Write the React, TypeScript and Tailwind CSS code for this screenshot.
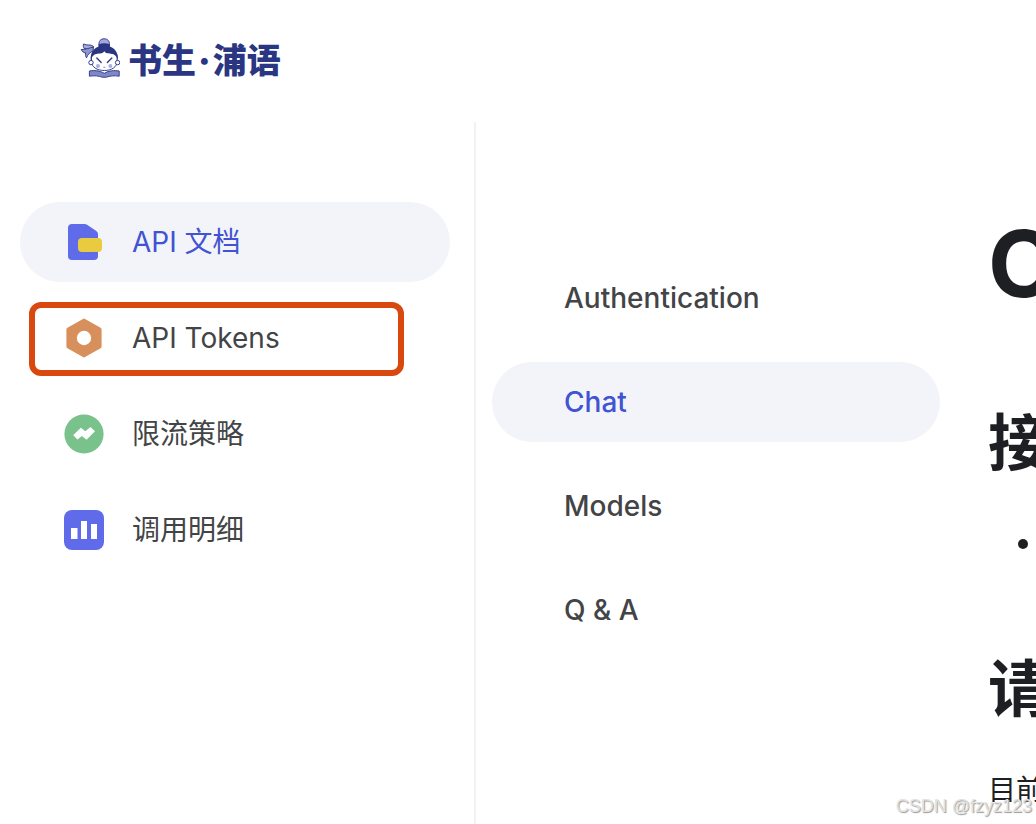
import type { ReactNode } from "react";
import clsx from "clsx";

function LogoMark() {
  return (
    <svg className="size-10 shrink-0" viewBox="0 0 40 40" fill="none" aria-hidden="true">
      <path d="M19 7.5C18.6 3 20.6.8 24.2.8S29.8 3 29.4 7.5Z" fill="#a3a9d8" stroke="#35408f" strokeWidth="1" />
      <path d="M18.5 6.6c3.6-1.7 7.8-1.7 11.4 0v2.6H18.5Z" fill="#2b3682" />
      <path d="M13.500 8.500C10.500 5.800 7.500 8 3.500 6c-.4 1.800-.3 3 .5 4.300l6.500 1.400Z" fill="#a3a9d8" stroke="#35408f" strokeWidth="1" />
      <path d="M13.500 9C9.500 9.800 5.500 11.800 1.200 11.500c.8 2 2.300 3.200 4.300 3.300-.2 1.900 0 3.400 1 5 1.300-3.700 3.500-5.300 6.500-6.800Z" fill="#8d95cc" stroke="#35408f" strokeWidth="1" />
      <path d="M11.500 19c0-5 5-9 12.800-9s12.800 4 12.800 9v4.500c0 5.500-5.500 9-12.800 9s-12.800-3.500-12.800-9Z" fill="#fff" stroke="#35408f" />
      <circle cx="11" cy="24.600" r="2.200" fill="#fff" stroke="#35408f" />
      <circle cx="37.600" cy="24.600" r="2.200" fill="#fff" stroke="#35408f" />
      <path d="M10.700 22.500C9.800 13.500 15 7.700 24.300 7.700S38.800 13.500 37.900 22.500c-1-2.500-1.700-5-4.400-6.200-3.300-1.300-7 .2-9.200-3-2.200 3.200-5.900 1.700-9.200 3-2.700 1.200-3.400 3.700-4.400 6.200Z" fill="#2b3682" />
      <path d="m16.800 20 4.400 4.500M31.800 20l-4.400 4.500" stroke="#2b3682" strokeWidth="1.300" strokeLinecap="round" />
      <circle cx="18" cy="28" r="2" fill="#a9aedb" />
      <circle cx="30.400" cy="28" r="2" fill="#a9aedb" />
      <path d="M23.300 29.300h2" stroke="#6a73b5" strokeWidth=".8" />
      <path d="M9.400 33c5-.8 10-.5 14.900 2.300C29.200 32.500 34.200 32.200 39.200 33v5.200c-5-.8-9.500-.3-12.800 1h-4.200c-3.300-1.300-7.800-1.800-12.800-1Z" fill="#7f88c4" stroke="#35408f" strokeWidth="1" />
    </svg>
  );
}

function DocIcon() {
  return (
    <svg className="size-10" viewBox="0 0 40 40" aria-hidden="true">
      <path d="M4 6a4 4 0 0 1 4-4h12.500c1 0 1.800.3 2.600.8L32.300 9c1.100.8 1.700 1.900 1.700 3.200V34a4 4 0 0 1-4 4H8a4 4 0 0 1-4-4Z" fill="#5f6be9" />
      <rect x="14" y="16" width="24" height="14" rx="4" fill="#e9cb3f" />
    </svg>
  );
}

function TokenIcon() {
  return (
    <svg className="size-10" viewBox="0 0 40 40" aria-hidden="true">
      <path d="M19 .9a2 2 0 0 1 2 0l15.600 8.800a2 2 0 0 1 1 1.700v17.200a2 2 0 0 1-1 1.700L21 39.100a2 2 0 0 1-2 0L3.400 30.300a2 2 0 0 1-1-1.700V11.400a2 2 0 0 1 1-1.700Z" fill="#d78f5b" />
      <circle cx="20" cy="20" r="7.200" fill="#fff" />
    </svg>
  );
}

function LimitIcon() {
  return (
    <svg className="size-10" viewBox="0 0 40 40" aria-hidden="true">
      <circle cx="20" cy="20" r="19.600" fill="#79c28b" />
      <path d="m9.200 21.200 7.600-7.500 4.500 3.600 5.200-4.300 4.500 4.200-8.500 8.500-4.600-3.700-4.400 3.500Z" fill="#fff" />
    </svg>
  );
}

function UsageIcon() {
  return (
    <svg className="size-10" viewBox="0 0 40 40" aria-hidden="true">
      <rect width="40" height="40" rx="8" fill="#5f6be9" />
      <path d="M7 18h6.500v11H7ZM17 11h6v18h-6ZM27 14h6v15h-6Z" fill="#fff" />
    </svg>
  );
}

type MenuItem = { label: string; icon: ReactNode; active?: boolean; marked?: boolean };

const menu: MenuItem[] = [
  { label: "API 文档", icon: <DocIcon />, active: true },
  { label: "API Tokens", icon: <TokenIcon />, marked: true },
  { label: "限流策略", icon: <LimitIcon /> },
  { label: "调用明细", icon: <UsageIcon /> },
];

const sections = ["Authentication", "Chat", "Models", "Q & A"];

export default function App() {
  return (
    <div className="relative flex min-h-screen flex-col overflow-hidden bg-white font-['Inter','Noto_Sans_CJK_SC',sans-serif] text-[#1e1f23]">
      <header className="px-20 pt-[38px] pb-11">
        <a href="#" className="flex h-10 items-center gap-2">
          <LogoMark />
          <span className="flex items-center pt-1.5 text-[34px] leading-10 font-black text-[#2b3682]">
            书生<span className="px-0.5">·</span>浦语
          </span>
        </a>
      </header>

      <div className="flex grow">
        <nav className="w-[476px] shrink-0 border-r-2 border-[#f2f2f4] pt-20 pr-6 pl-5">
          <ul className="flex flex-col gap-4">
            {menu.map((item) => (
              <li key={item.label} className="relative">
                <a
                  href="#"
                  className={clsx(
                    "flex h-20 items-center gap-7 rounded-full px-11 text-[28px]",
                    item.active ? "bg-[#f3f4f9] text-[#4153d2]" : "text-[#434446]",
                  )}
                >
                  {item.icon}
                  {item.label}
                </a>
                {item.marked && (
                  <span className="pointer-events-none absolute top-1 right-[46px] bottom-0.5 left-[9px] rounded-xl border-6 border-[#d9480f]" />
                )}
              </li>
            ))}
          </ul>
        </nav>

        <nav className="w-[464px] shrink-0 pt-[136px] pl-4">
          <ul className="flex flex-col gap-6">
            {sections.map((name) => (
              <li key={name}>
                <a
                  href="#"
                  className={clsx(
                    "flex h-20 items-center rounded-full px-18 text-[28px] font-medium",
                    name === "Chat" ? "bg-[#f3f4f9] text-[#4153d2]" : "text-[#434446]",
                  )}
                >
                  {name}
                </a>
              </li>
            ))}
          </ul>
        </nav>

        <main className="min-w-0 grow overflow-hidden pt-20 pl-12 whitespace-nowrap">
          <h1 className="pt-3 text-[92px] leading-[100px] font-bold">Chat</h1>
          <h2 className="pt-[90px] text-[62px] leading-20 font-bold">接口</h2>
          <ul className="list-none pt-10 pl-[30px]">
            <li className="flex h-10 items-center">
              <span className="size-2.5 shrink-0 rounded-full bg-[#1e1f23]" />
            </li>
          </ul>
          <h2 className="pt-[86px] text-[62px] leading-20 font-bold">请求</h2>
          <p className="pt-10 text-[28px] leading-10">目前</p>
        </main>
      </div>

      <p className="absolute right-1 bottom-1 font-['Liberation_Sans',sans-serif] text-[18px] leading-7 text-[#e2e2e2] [text-shadow:1px_1px_1px_#999]">
        CSDN @fzyz123
      </p>
    </div>
  );
}
